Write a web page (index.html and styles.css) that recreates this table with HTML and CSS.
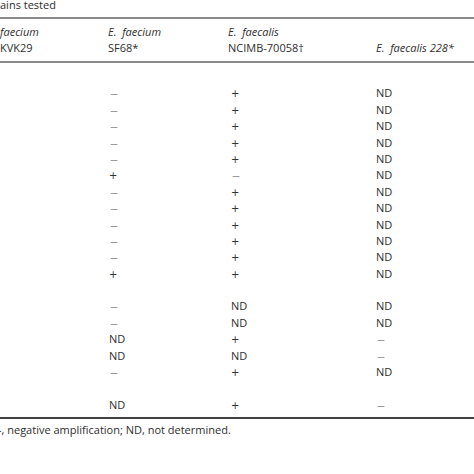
FILE: index.html
```html
<!DOCTYPE html>
<html>
<head>
<meta charset="utf-8">
<link rel="stylesheet" href="styles.css">
</head>
<body>
<div class="page">
  <div class="title">ains tested</div>
  <div class="head">
    <div class="hcell"><i>faecium</i><br>KVK29</div>
    <div class="hcell"><i>E.&nbsp; faecium</i><br>SF68*</div>
    <div class="hcell"><i>E.&nbsp; faecalis</i><br>NCIMB-70058†</div>
    <div class="hcell"><br><i>E.&nbsp; faecalis 228*</i></div>
  </div>
  <div class="body">
    <div class="row"><span></span><span></span><span class="c3"></span><span></span></div>
    <div class="row"><span></span><span><b class="neg">–</b></span><span class="c3"><b class="pos">+</b></span><span>ND</span></div>
    <div class="row"><span></span><span><b class="neg">–</b></span><span class="c3"><b class="pos">+</b></span><span>ND</span></div>
    <div class="row"><span></span><span><b class="neg">–</b></span><span class="c3"><b class="pos">+</b></span><span>ND</span></div>
    <div class="row"><span></span><span><b class="neg">–</b></span><span class="c3"><b class="pos">+</b></span><span>ND</span></div>
    <div class="row"><span></span><span><b class="neg">–</b></span><span class="c3"><b class="pos">+</b></span><span>ND</span></div>
    <div class="row"><span></span><span><b class="pos">+</b></span><span class="c3"><b class="neg">–</b></span><span>ND</span></div>
    <div class="row"><span></span><span><b class="neg">–</b></span><span class="c3"><b class="pos">+</b></span><span>ND</span></div>
    <div class="row"><span></span><span><b class="neg">–</b></span><span class="c3"><b class="pos">+</b></span><span>ND</span></div>
    <div class="row"><span></span><span><b class="neg">–</b></span><span class="c3"><b class="pos">+</b></span><span>ND</span></div>
    <div class="row"><span></span><span><b class="neg">–</b></span><span class="c3"><b class="pos">+</b></span><span>ND</span></div>
    <div class="row"><span></span><span><b class="neg">–</b></span><span class="c3"><b class="pos">+</b></span><span>ND</span></div>
    <div class="row"><span></span><span><b class="pos">+</b></span><span class="c3"><b class="pos">+</b></span><span>ND</span></div>
    <div class="row"><span></span><span></span><span class="c3"></span><span></span></div>
    <div class="row"><span></span><span><b class="neg">–</b></span><span class="c3">ND</span><span>ND</span></div>
    <div class="row"><span></span><span><b class="neg">–</b></span><span class="c3">ND</span><span>ND</span></div>
    <div class="row"><span></span><span>ND</span><span class="c3"><b class="pos">+</b></span><span><b class="neg">–</b></span></div>
    <div class="row"><span></span><span>ND</span><span class="c3">ND</span><span><b class="neg">–</b></span></div>
    <div class="row"><span></span><span><b class="neg">–</b></span><span class="c3"><b class="pos">+</b></span><span>ND</span></div>
    <div class="row"><span></span><span></span><span class="c3"></span><span></span></div>
    <div class="row"><span></span><span>ND</span><span class="c3"><b class="pos">+</b></span><span><b class="neg">–</b></span></div>
  </div>
  <div class="foot">–, negative amplification; ND, not determined.</div>
</div>
</body>
</html>
```

FILE: styles.css
```css
html, body {
  margin: 0;
  padding: 0;
  background: #ffffff;
}
body {
  font-family: "Open Sans", "Liberation Sans", sans-serif;
  font-size: 11px;
  color: #2e2e2e;
  overflow: hidden;
  -webkit-font-smoothing: antialiased;
}
.page {
  width: 474px;
}
.title {
  line-height: 10px;
  height: 8px;
  margin-bottom: 9px;
}
.head {
  display: grid;
  grid-template-columns: 108px 120px 148px 1fr;
  border-top: 2px solid #8a8a8a;
  border-bottom: 2px solid #8a8a8a;
  padding: 5px 0 5px 0;
  line-height: 16px;
}
.hcell {
  white-space: nowrap;
}
.body {
  padding-top: 6px;
  padding-bottom: 4px;
  border-bottom: 2px solid #404040;
}
.row {
  display: grid;
  grid-template-columns: 109px 119px 148px 1fr;
  height: 16.4px;
  line-height: 16.4px;
}
.row span {
  white-space: nowrap;
}
.c3 {
  padding-left: 3px;
}
.neg {
  display: inline-block;
  font-weight: normal;
  color: #8c8c8c;
  transform: scaleX(1.45);
  transform-origin: left center;
  margin-left: 1px;
}
.pos {
  font-family: "DejaVu Sans", "Liberation Sans", sans-serif;
  font-weight: normal;
  font-size: 10px;
  color: #333333;
}
.foot {
  margin-top: 3px;
  line-height: 16px;
  text-indent: -4px;
  white-space: nowrap;
}
```
